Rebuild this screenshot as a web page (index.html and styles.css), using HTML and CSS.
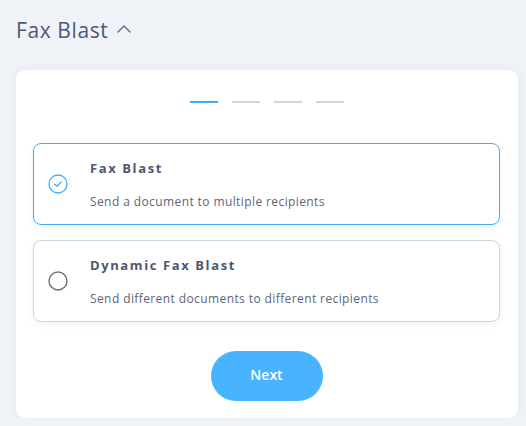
FILE: index.html
```html
<!DOCTYPE html>
<html>
<head>
<meta charset="utf-8">
<link rel="stylesheet" href="styles.css">
</head>
<body>
<div class="page">
  <div class="header">
    <span class="header-title">Fax Blast</span>
    <svg class="chevron" width="14" height="8" viewBox="0 0 14 8"><path d="M1 7 L7 1 L13 7" fill="none" stroke="#5a6a80" stroke-width="1.4" stroke-linecap="round" stroke-linejoin="round"/></svg>
  </div>
  <div class="card">
    <div class="steps">
      <span class="step active"></span>
      <span class="step"></span>
      <span class="step"></span>
      <span class="step"></span>
    </div>
    <div class="options">
      <div class="option selected">
        <svg class="radio" width="20" height="20" viewBox="0 0 20 20"><circle cx="10" cy="10" r="9" fill="none" stroke="#45acf8" stroke-width="1.3"/><path d="M6.6 10.2 L8.9 12.3 L13.2 8" fill="none" stroke="#45acf8" stroke-width="1.3" stroke-linecap="round" stroke-linejoin="round"/></svg>
        <div class="option-text">
          <div class="option-title">Fax Blast</div>
          <div class="option-desc">Send a document to multiple recipients</div>
        </div>
      </div>
      <div class="option">
        <svg class="radio" width="20" height="20" viewBox="0 0 20 20"><circle cx="10" cy="10" r="9" fill="none" stroke="#6b7178" stroke-width="1.4"/></svg>
        <div class="option-text">
          <div class="option-title">Dynamic Fax Blast</div>
          <div class="option-desc">Send different documents to different recipients</div>
        </div>
      </div>
    </div>
    <div class="actions">
      <button class="next">Next</button>
    </div>
  </div>
</div>
</body>
</html>
```
FILE: styles.css
```css
* { box-sizing: border-box; }
html, body {
  margin: 0;
  padding: 0;
  background: #eff3f8;
  font-family: "Open Sans", "Noto Sans", sans-serif;
}
.page {
  padding: 16px 8px 0 16px;
}
.header {
  display: flex;
  align-items: center;
  height: 28px;
  gap: 9px;
}
.header-title {
  font-size: 21px;
  color: #4a5a70;
  line-height: 28px;
  letter-spacing: 0.6px;
}
.chevron {
  margin-top: -2px;
}
.card {
  margin-top: 26px;
  background: #fff;
  border-radius: 9px;
  box-shadow: 0 0 10px rgba(40, 60, 90, 0.06);
  padding: 31px 18px 17px 17px;
  height: 348px;
}
.steps {
  display: flex;
  justify-content: center;
  gap: 14px;
}
.step {
  width: 28px;
  height: 2px;
  background: #d3d3d3;
}
.step.active {
  background: #45acf8;
}
.options {
  margin-top: 40px;
  display: flex;
  flex-direction: column;
  gap: 15px;
}
.option {
  display: flex;
  align-items: center;
  height: 82px;
  border: 1px solid #d3d3d3;
  border-radius: 8px;
  padding: 0 14px;
  background: #fff;
  box-shadow: 0 2px 10px rgba(0, 0, 0, 0.05);
}
.option.selected {
  border-color: #45acf8;
}
.radio {
  flex: none;
  margin-top: -1px;
}
.option-text {
  margin-left: 22px;
  display: flex;
  flex-direction: column;
  gap: 15px;
}
.option-title {
  font-size: 13px;
  font-weight: 700;
  color: #4a5870;
  letter-spacing: 1.6px;
  line-height: 20px;
}
.option-desc {
  font-size: 12px;
  color: #5c6678;
  line-height: 18px;
  letter-spacing: 0.4px;
}
.actions {
  display: flex;
  justify-content: center;
  margin-top: 29px;
}
.next {
  width: 112px;
  height: 50px;
  border: none;
  border-radius: 25px;
  background: #48b3fe;
  color: #fff;
  font-family: inherit;
  font-size: 14px;
  font-weight: 600;
  padding: 0 0 3px;
  cursor: pointer;
}
```
